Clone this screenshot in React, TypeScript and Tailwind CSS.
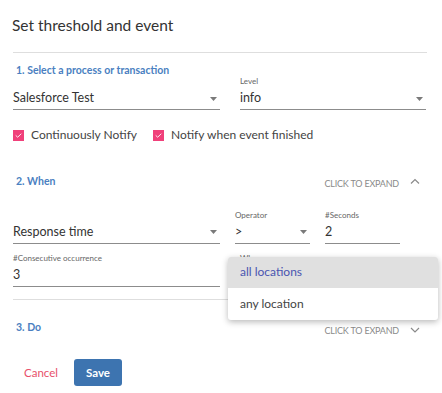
import React from "react";

type FieldProps = {
  label?: string;
  value: string;
  width: string;
  arrow?: boolean;
};

function Arrow() {
  return (
    <svg width="7" height="4" viewBox="0 0 7 4" className="mr-[3px]">
      <path d="M0 0 L7 0 L3.5 4 Z" fill="#7a7a7a" />
    </svg>
  );
}

function Caret({ up }: { up?: boolean }) {
  return (
    <svg width="10" height="6" viewBox="0 0 10 6" className={up ? "mb-[6px]" : ""}>
      <path
        d={up ? "M1 5.5 L5 1.5 L9 5.5" : "M1 1 L5 5 L9 1"}
        fill="none"
        stroke="#8a8a8a"
        strokeWidth="1.2"
      />
    </svg>
  );
}

function Field({ label, value, width, arrow }: FieldProps) {
  return (
    <div className={`flex flex-col ${width}`}>
      {label && (
        <span className="text-[8px] leading-[10px] text-[#666] mb-[2px]">{label}</span>
      )}
      <div className="h-[22px] border-b border-[#8c8c8c] flex items-center justify-between">
        <span className="text-[12.5px] text-[#333] leading-none">{value}</span>
        {arrow && <Arrow />}
      </div>
    </div>
  );
}

function Check({ label }: { label: string }) {
  return (
    <label className="flex items-center gap-[7px]">
      <span className="w-[11px] h-[11px] bg-[#f0407a] flex items-center justify-center">
        <svg width="7" height="5" viewBox="0 0 7 5">
          <path d="M0.7 2.4 L2.7 4.2 L6.3 0.7" fill="none" stroke="#fff" strokeWidth="0.9" />
        </svg>
      </span>
      <span className="text-[12px] text-[#444]">{label}</span>
    </label>
  );
}

function SectionHeader({ title, up }: { title: string; up?: boolean }) {
  return (
    <div className="flex items-center justify-between pl-[3px] pr-[7px]">
      <span className="text-[10.5px] font-bold text-[#4a7fc1]">{title}</span>
      <div className="flex items-center gap-[11px] pt-[4px]">
        <span className="text-[9px] text-[#8a8a8a] tracking-[-0.2px]">CLICK TO EXPAND</span>
        <Caret up={up} />
      </div>
    </div>
  );
}

export default function App() {
  return (
    <div
      className="w-[442px] h-[393px] bg-white pl-[13px] pr-[15px] overflow-hidden"
      style={{ fontFamily: "Lato, 'Noto Sans', sans-serif" }}
    >
      {/* title */}
      <h1 className="pt-[14px] -ml-px text-[15.5px] leading-[22px] text-[#333]">
        Set threshold and event
      </h1>
      <div className="mt-[16px] border-t border-[#dedede]" />

      {/* 1. select */}
      <div className="mt-[10px] pl-[3px] text-[10.5px] font-bold leading-[14px] text-[#4a7fc1]">
        1. Select a process or transaction
      </div>
      <div className="flex items-end gap-[20px] mt-[-1px]">
        <Field value="Salesforce Test" width="w-[207px]" arrow />
        <Field label="Level" value="info" width="w-[186px]" arrow />
      </div>
      <div className="flex items-center gap-[16px] mt-[16px]">
        <Check label="Continuously Notify" />
        <Check label="Notify when event finished" />
      </div>

      {/* 2. when */}
      <div className="mt-[29px]">
        <SectionHeader title="2. When" up />
      </div>
      <div className="flex items-end mt-[19px]">
        <Field value="Response time" width="w-[207px]" arrow />
        <div className="ml-[15px]">
          <Field label="Operator" value=">" width="w-[75px]" arrow />
        </div>
        <div className="ml-[15px]">
          <Field label="#Seconds" value="2" width="w-[75px]" />
        </div>
      </div>
      <div className="flex items-end mt-[9px]">
        <Field label="#Consecutive occurrence" value="3" width="w-[207px]" />
        <div className="relative ml-[20px]">
          <Field label="Where" value="" width="w-[186px]" arrow />
          {/* open menu */}
          <div className="absolute left-[-12px] top-[4px] w-[210px] bg-white rounded-[3px] shadow-[0_2px_6px_rgba(0,0,0,0.28)] overflow-hidden z-10">
            <div className="h-[31px] bg-[#e0e0e0] flex items-center pl-[12px] text-[12px] text-[#4a55b0]">
              all locations
            </div>
            <div className="h-[32px] flex items-center pl-[12px] text-[12px] text-[#444]">
              any location
            </div>
          </div>
        </div>
      </div>
      <div className="mt-[12px] border-t border-[#dedede]" />

      {/* 3. do */}
      <div className="mt-[20px]">
        <SectionHeader title="3. Do" />
      </div>

      {/* actions */}
      <div className="flex items-center mt-[22px] pl-[11px]">
        <button className="text-[11.5px] text-[#e8506a]">Cancel</button>
        <button className="ml-[16px] w-[48px] h-[27px] rounded-[3px] bg-[#3d74b0] text-white text-[11.5px] font-bold">
          Save
        </button>
      </div>
    </div>
  );
}
